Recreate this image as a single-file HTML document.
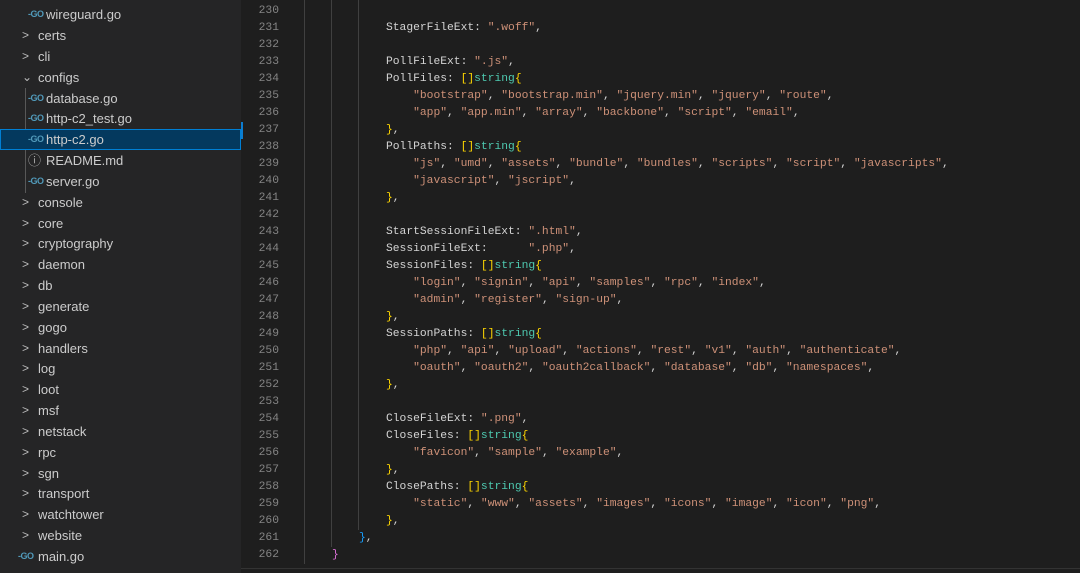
<!DOCTYPE html><html><head><style>
body{margin:0;width:1080px;height:573px;overflow:hidden;background:#1e1e1e;font-family:"Liberation Sans",sans-serif;position:relative}
#sb{position:absolute;left:0;top:0;width:241px;height:573px;background:#252526}
.r{position:absolute;left:0;width:241px;height:21px;line-height:21px;font-size:13px;color:#cccccc;white-space:nowrap}
.r .c{position:absolute;left:22px;top:0;color:#bbb;font-size:12px}
.r .t{position:absolute}
.go{position:absolute;color:#519aba;font-size:9px;font-weight:bold;letter-spacing:-0.5px}
.sel{background:#04395e;outline:1px solid #007fd4;outline-offset:-1px}
#ed{position:absolute;left:241px;top:0;right:0;height:568px;border-bottom:1px solid #333}
.l{position:absolute;left:0;height:17px;line-height:17px;font-family:"Liberation Mono",monospace;font-size:11.3px;white-space:pre;color:#d4d4d4}
.n{position:absolute;width:38px;text-align:right;color:#858585}
.code{position:absolute;left:145px}
.s{color:#ce9178}.y{color:#ffd700}.g{color:#4ec9b0}.b{color:#179fff}.m{color:#da70d6}
.ig{position:absolute;top:0;width:1px;background:#404040}
</style></head><body>
<div id="sb">
<div style="position:absolute;left:25px;top:88px;width:1px;height:105px;background:#585858"></div>
<div class="r" style="top:4px"><span class="go" style="left:28px">-GO</span><span class="t" style="left:46px">wireguard.go</span></div>
<div class="r" style="top:25px"><span class="c">&gt;</span><span class="t" style="left:38px">certs</span></div>
<div class="r" style="top:46px"><span class="c">&gt;</span><span class="t" style="left:38px">cli</span></div>
<div class="r" style="top:67px"><span class="c">&#8964;</span><span class="t" style="left:38px">configs</span></div>
<div class="r" style="top:88px"><span class="go" style="left:28px">-GO</span><span class="t" style="left:46px">database.go</span></div>
<div class="r" style="top:108px"><span class="go" style="left:28px">-GO</span><span class="t" style="left:46px">http-c2_test.go</span></div>
<div class="r sel" style="top:129px"><span class="go" style="left:28px">-GO</span><span class="t" style="left:46px">http-c2.go</span></div>
<div class="r" style="top:150px"><span class="t" style="left:28px;color:#aaa">ⓘ</span><span class="t" style="left:46px">README.md</span></div>
<div class="r" style="top:171px"><span class="go" style="left:28px">-GO</span><span class="t" style="left:46px">server.go</span></div>
<div class="r" style="top:192px"><span class="c">&gt;</span><span class="t" style="left:38px">console</span></div>
<div class="r" style="top:213px"><span class="c">&gt;</span><span class="t" style="left:38px">core</span></div>
<div class="r" style="top:233px"><span class="c">&gt;</span><span class="t" style="left:38px">cryptography</span></div>
<div class="r" style="top:254px"><span class="c">&gt;</span><span class="t" style="left:38px">daemon</span></div>
<div class="r" style="top:275px"><span class="c">&gt;</span><span class="t" style="left:38px">db</span></div>
<div class="r" style="top:296px"><span class="c">&gt;</span><span class="t" style="left:38px">generate</span></div>
<div class="r" style="top:317px"><span class="c">&gt;</span><span class="t" style="left:38px">gogo</span></div>
<div class="r" style="top:338px"><span class="c">&gt;</span><span class="t" style="left:38px">handlers</span></div>
<div class="r" style="top:358px"><span class="c">&gt;</span><span class="t" style="left:38px">log</span></div>
<div class="r" style="top:379px"><span class="c">&gt;</span><span class="t" style="left:38px">loot</span></div>
<div class="r" style="top:400px"><span class="c">&gt;</span><span class="t" style="left:38px">msf</span></div>
<div class="r" style="top:421px"><span class="c">&gt;</span><span class="t" style="left:38px">netstack</span></div>
<div class="r" style="top:442px"><span class="c">&gt;</span><span class="t" style="left:38px">rpc</span></div>
<div class="r" style="top:463px"><span class="c">&gt;</span><span class="t" style="left:38px">sgn</span></div>
<div class="r" style="top:483px"><span class="c">&gt;</span><span class="t" style="left:38px">transport</span></div>
<div class="r" style="top:504px"><span class="c">&gt;</span><span class="t" style="left:38px">watchtower</span></div>
<div class="r" style="top:525px"><span class="c">&gt;</span><span class="t" style="left:38px">website</span></div>
<div class="r" style="top:546px"><span class="go" style="left:18px">-GO</span><span class="t" style="left:38px">main.go</span></div>
</div>
<div id="ed">
<div class="ig" style="left:63px;height:564px"></div>
<div class="ig" style="left:90px;height:547px"></div>
<div class="ig" style="left:117px;height:530px"></div>
<div style="position:absolute;left:0;top:122px;width:2px;height:17px;background:#0c7dd0"></div>
<div id="lines"></div>
</div>
<script>
const L=[
"",
'StagerFileExt: <span class=s>".woff"</span>,',
"",
'PollFileExt: <span class=s>".js"</span>,',
'PollFiles: <span class=y>[]</span><span class=g>string</span><span class=y>{</span>',
'    <span class=s>"bootstrap"</span>, <span class=s>"bootstrap.min"</span>, <span class=s>"jquery.min"</span>, <span class=s>"jquery"</span>, <span class=s>"route"</span>,',
'    <span class=s>"app"</span>, <span class=s>"app.min"</span>, <span class=s>"array"</span>, <span class=s>"backbone"</span>, <span class=s>"script"</span>, <span class=s>"email"</span>,',
'<span class=y>}</span>,',
'PollPaths: <span class=y>[]</span><span class=g>string</span><span class=y>{</span>',
'    <span class=s>"js"</span>, <span class=s>"umd"</span>, <span class=s>"assets"</span>, <span class=s>"bundle"</span>, <span class=s>"bundles"</span>, <span class=s>"scripts"</span>, <span class=s>"script"</span>, <span class=s>"javascripts"</span>,',
'    <span class=s>"javascript"</span>, <span class=s>"jscript"</span>,',
'<span class=y>}</span>,',
"",
'StartSessionFileExt: <span class=s>".html"</span>,',
'SessionFileExt:      <span class=s>".php"</span>,',
'SessionFiles: <span class=y>[]</span><span class=g>string</span><span class=y>{</span>',
'    <span class=s>"login"</span>, <span class=s>"signin"</span>, <span class=s>"api"</span>, <span class=s>"samples"</span>, <span class=s>"rpc"</span>, <span class=s>"index"</span>,',
'    <span class=s>"admin"</span>, <span class=s>"register"</span>, <span class=s>"sign-up"</span>,',
'<span class=y>}</span>,',
'SessionPaths: <span class=y>[]</span><span class=g>string</span><span class=y>{</span>',
'    <span class=s>"php"</span>, <span class=s>"api"</span>, <span class=s>"upload"</span>, <span class=s>"actions"</span>, <span class=s>"rest"</span>, <span class=s>"v1"</span>, <span class=s>"auth"</span>, <span class=s>"authenticate"</span>,',
'    <span class=s>"oauth"</span>, <span class=s>"oauth2"</span>, <span class=s>"oauth2callback"</span>, <span class=s>"database"</span>, <span class=s>"db"</span>, <span class=s>"namespaces"</span>,',
'<span class=y>}</span>,',
"",
'CloseFileExt: <span class=s>".png"</span>,',
'CloseFiles: <span class=y>[]</span><span class=g>string</span><span class=y>{</span>',
'    <span class=s>"favicon"</span>, <span class=s>"sample"</span>, <span class=s>"example"</span>,',
'<span class=y>}</span>,',
'ClosePaths: <span class=y>[]</span><span class=g>string</span><span class=y>{</span>',
'    <span class=s>"static"</span>, <span class=s>"www"</span>, <span class=s>"assets"</span>, <span class=s>"images"</span>, <span class=s>"icons"</span>, <span class=s>"image"</span>, <span class=s>"icon"</span>, <span class=s>"png"</span>,',
'<span class=y>}</span>,',
'<span class=b>}</span>,',
'<span class=m>}</span>'
];
const left={31:118,32:91};
let h="";L.forEach((c,i)=>{h+=`<div class="l" style="top:${3+i*17}px"><span class="n">${230+i}</span><span class="code" style="left:${left[i]||145}px">${c}</span></div>`});
document.getElementById('lines').innerHTML=h;
</script>
</body></html>
